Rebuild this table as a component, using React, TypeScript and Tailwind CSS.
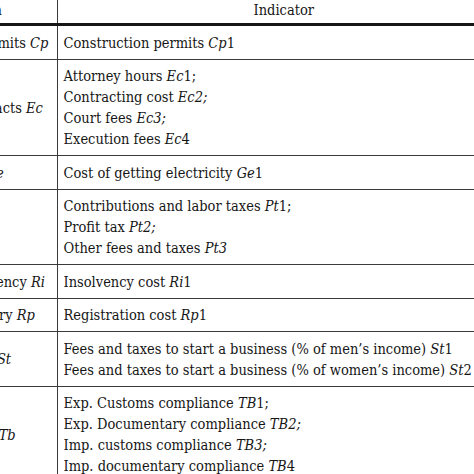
type Part = { t: string; i?: boolean }

type Row = {
  label: Part[]
  lines: Part[][]
}

const rows: Row[] = [
  {
    label: [{ t: 'Construction permits ' }, { t: 'Cp', i: true }],
    lines: [[{ t: 'Construction permits ' }, { t: 'Cp', i: true }, { t: '1' }]],
  },
  {
    label: [{ t: 'Enforcing contracts ' }, { t: 'Ec', i: true }],
    lines: [
      [{ t: 'Attorney hours ' }, { t: 'Ec', i: true }, { t: '1;' }],
      [{ t: 'Contracting cost ' }, { t: 'Ec2;', i: true }],
      [{ t: 'Court fees ' }, { t: 'Ec3;', i: true }],
      [{ t: 'Execution fees ' }, { t: 'Ec', i: true }, { t: '4' }],
    ],
  },
  {
    label: [{ t: 'Electric ' }, { t: 'Ge', i: true }],
    lines: [[{ t: 'Cost of getting electricity ' }, { t: 'Ge', i: true }, { t: '1' }]],
  },
  {
    label: [{ t: 'Taxes ' }, { t: 'Pt', i: true }],
    lines: [
      [{ t: 'Contributions and labor taxes ' }, { t: 'Pt', i: true }, { t: '1;' }],
      [{ t: 'Profit tax ' }, { t: 'Pt2;', i: true }],
      [{ t: 'Other fees and taxes ' }, { t: 'Pt3', i: true }],
    ],
  },
  {
    label: [{ t: 'Resolving insolvency ' }, { t: 'Ri', i: true }],
    lines: [[{ t: 'Insolvency cost ' }, { t: 'Ri', i: true }, { t: '1' }]],
  },
  {
    label: [{ t: 'Property registry ' }, { t: 'Rp', i: true }],
    lines: [[{ t: 'Registration cost ' }, { t: 'Rp', i: true }, { t: '1' }]],
  },
  {
    label: [{ t: 'Enterprise ' }, { t: 'St', i: true }],
    lines: [
      [{ t: 'Fees and taxes to start a business (% of men’s income) ' }, { t: 'St', i: true }, { t: '1' }],
      [{ t: 'Fees and taxes to start a business (% of women’s income) ' }, { t: 'St', i: true }, { t: '2' }],
    ],
  },
  {
    label: [{ t: 'Trade costs ' }, { t: 'Tb', i: true }],
    lines: [
      [{ t: 'Exp. Customs compliance ' }, { t: 'TB', i: true }, { t: '1;' }],
      [{ t: 'Exp. Documentary compliance ' }, { t: 'TB2;', i: true }],
      [{ t: 'Imp. customs compliance ' }, { t: 'TB3;', i: true }],
      [{ t: 'Imp. documentary compliance ' }, { t: 'TB', i: true }, { t: '4' }],
    ],
  },
]

function Text({ parts }: { parts: Part[] }) {
  return (
    <>
      {parts.map((p, k) =>
        p.i ? (
          <em key={k} className="italic">
            {p.t}
          </em>
        ) : (
          <span key={k}>{p.t}</span>
        ),
      )}
    </>
  )
}

export default function App() {
  return (
    <div
      className="w-[474px] h-[474px] overflow-hidden bg-white text-[#161616] text-[14.5px] leading-[21px] [font-stretch:condensed]"
      style={{ fontFamily: '"DejaVu Serif Condensed", "DejaVu Serif", serif' }}
    >
      <table className="-mt-[7px] -ml-[123px] w-[633px] border-collapse table-fixed">
        <colgroup>
          <col className="w-[180px]" />
          <col className="w-[453px]" />
        </colgroup>
        <thead>
          <tr className="border-t border-b-[3px] border-[#161616]">
            <th className="font-normal text-center pt-[6px] pb-[2px] px-[6px] border-r-[1.5px] border-[#3a3a3a]">
              Dimension
            </th>
            <th className="font-normal text-center pt-[6px] pb-[2px] px-[6px]">Indicator</th>
          </tr>
        </thead>
        <tbody>
          {rows.map((r, i) => (
            <tr key={i} className="border-b-[1.5px] border-[#3a3a3a]">
              <td className="align-middle text-center whitespace-nowrap pt-[6.5px] pb-[5px] px-[6px] border-r-[1.5px] border-[#3a3a3a]">
                <Text parts={r.label} />
              </td>
              <td className="align-top whitespace-nowrap pt-[6.5px] pb-[5px] px-[6px]">
                {r.lines.map((l, j) => (
                  <div key={j}>
                    <Text parts={l} />
                  </div>
                ))}
              </td>
            </tr>
          ))}
        </tbody>
      </table>
    </div>
  )
}
